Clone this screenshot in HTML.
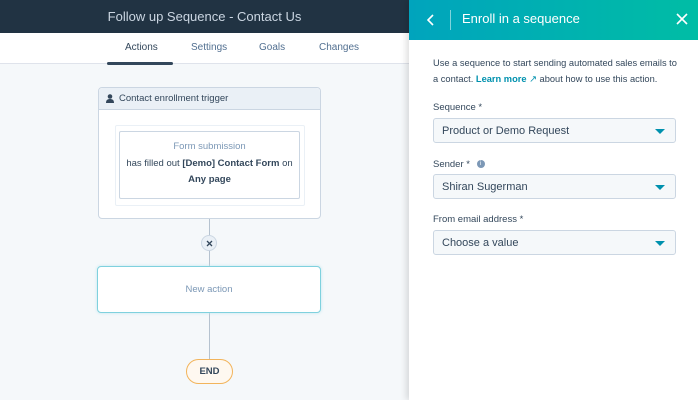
<!DOCTYPE html>
<html><head><style>
*{margin:0;padding:0;box-sizing:border-box}
body{width:698px;height:400px;overflow:hidden;font-family:"Liberation Sans",sans-serif;background:#f5f8fa;position:relative;color:#33475b}
.top{position:absolute;left:0;top:0;width:698px;height:33px;background:#213343;color:#cbd6e2;font-size:13px;text-align:center;line-height:33px}
.top span{position:absolute;left:140px;width:138px;text-align:center;white-space:nowrap}
.tabs{position:absolute;left:0;top:33px;width:698px;height:31px;background:#fff;border-bottom:1px solid #dfe3eb;font-size:10px}
.tabs div{position:absolute;top:9px}
.ul{position:absolute;left:107px;top:62px;width:66px;height:3px;background:#33475b;border-radius:2px}
.card{position:absolute;background:#fff;border:1px solid #cbd6e2;border-radius:4px}
.line{position:absolute;left:208.5px;width:1px;background:#b5c2cf}
.panel{position:absolute;left:409px;top:0;width:289px;height:400px;background:#fff;box-shadow:-3px 0 6px rgba(0,0,0,.12)}
.ph{height:40px;background:linear-gradient(90deg,#00a4bd,#00bda5);color:#fff;position:relative}
.lbl{position:absolute;left:24px;font-size:9.5px;color:#33475b}
.sel{position:absolute;left:24px;width:243px;height:25px;background:#f5f8fa;border:1px solid #cbd6e2;border-radius:3px;font-size:11px;line-height:24px;padding-left:8px;color:#33475b}
.sel:after{content:"";position:absolute;right:10px;top:10px;border-left:5px solid transparent;border-right:5px solid transparent;border-top:5px solid #0091ae}
</style></head><body>
<div class="top"><span style="left:0;width:409px">Follow up Sequence - Contact Us</span></div>
<div class="tabs">
<div style="left:125px;color:#33475b">Actions</div>
<div style="left:191px;color:#516f90">Settings</div>
<div style="left:259px;color:#516f90">Goals</div>
<div style="left:319px;color:#516f90">Changes</div>
</div>
<div class="ul"></div>
<div class="line" style="top:219px;height:47px"></div>
<div class="line" style="top:313px;height:47px"></div>
<div class="card" style="left:98px;top:87px;width:223px;height:132px">
<div style="height:22px;background:#eaf0f6;border-bottom:1px solid #cbd6e2;border-radius:4px 4px 0 0;font-size:9.5px;line-height:22px;padding-left:20px;position:relative">
<svg style="position:absolute;left:7px;top:6px" width="8" height="9" viewBox="0 0 8 9"><circle cx="4" cy="2.5" r="2.3" fill="#33475b"/><path d="M0 9C0 6 1.5 5 4 5S8 6 8 9Z" fill="#33475b"/></svg>Contact enrollment trigger</div>
<div style="position:absolute;left:16px;top:37px;width:190px;height:81px;border:1px solid #eaf0f6;border-radius:2px"></div>
<div style="position:absolute;left:20px;top:43px;width:181px;height:68px;border:1px solid #cbd6e2;border-radius:2px;text-align:center;font-size:9.5px">
<div style="color:#7c98b6;margin-top:9px">Form submission</div>
<div style="margin-top:6px">has filled out <b>[Demo] Contact Form</b> on</div>
<div style="margin-top:5px"><b>Any page</b></div>
</div></div>
<div style="position:absolute;left:201px;top:235px;width:16px;height:16px;border-radius:50%;background:#eaf0f6;border:1px solid #cbd6e2"><svg style="position:absolute;left:3.5px;top:3.5px" width="7" height="7" viewBox="0 0 7 7"><path d="M1 1L6 6M6 1L1 6" stroke="#33475b" stroke-width="1.3"/></svg></div>
<div class="card" style="left:97px;top:266px;width:224px;height:47px;border-color:#7fd1de;box-shadow:0 0 3px #bfe6ee;text-align:center;line-height:45px;font-size:9.5px;color:#7c98b6">New action</div>
<div style="position:absolute;left:186px;top:359px;width:47px;height:25px;border-radius:13px;background:#fef8f0;border:1px solid #f2b45b;text-align:center;line-height:23px;font-size:9.5px;font-weight:bold;color:#33475b">END</div>
<div class="panel">
<div class="ph">
<svg style="position:absolute;left:18px;top:14px" width="7" height="12" viewBox="0 0 7 12"><path d="M6 1L1 6L6 11" stroke="#fff" stroke-width="1.6" fill="none"/></svg>
<div style="position:absolute;left:41px;top:10px;width:1px;height:20px;background:rgba(255,255,255,.5)"></div>
<div style="position:absolute;left:53px;top:11px;font-size:13px">Enroll in a sequence</div>
<svg style="position:absolute;left:267px;top:13px" width="12" height="12" viewBox="0 0 12 12"><path d="M1 1L11 11M11 1L1 11" stroke="#fff" stroke-width="1.6"/></svg>
</div>
<div style="position:absolute;left:24px;top:55px;width:252px;font-size:9.3px;line-height:16px;color:#33475b">Use a sequence to start sending automated sales emails to<br>a contact. <span style="color:#0091ae;font-weight:bold">Learn more</span> <span style="color:#0091ae">↗</span> about how to use this action.</div>
<div class="lbl" style="top:102px">Sequence *</div>
<div class="sel" style="top:118px">Product or Demo Request</div>
<div class="lbl" style="top:159px">Sender * <span style="display:inline-block;width:8px;height:8px;border-radius:50%;background:#7c98b6;color:#fff;font-size:6px;text-align:center;line-height:8px;margin-left:4px;vertical-align:middle">i</span></div>
<div class="sel" style="top:174px">Shiran Sugerman</div>
<div class="lbl" style="top:214px">From email address *</div>
<div class="sel" style="top:230px">Choose a value</div>
</div>
</body></html>
